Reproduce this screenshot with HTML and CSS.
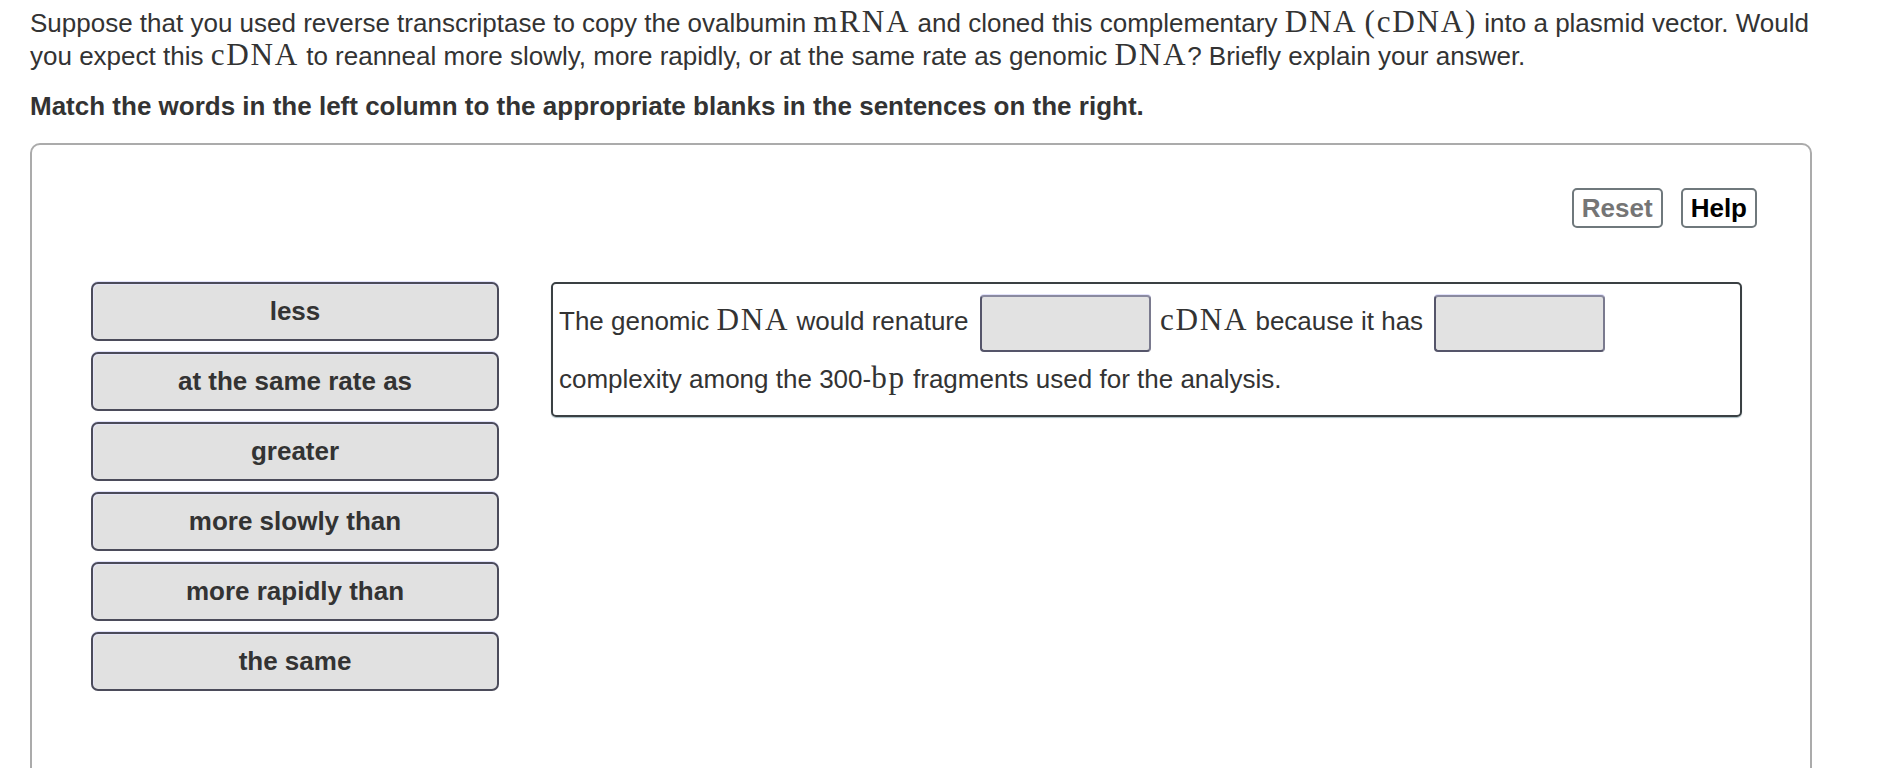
FILE: index.html
```html
<!DOCTYPE html>
<html lang="en">
<head>
<meta charset="utf-8">
<title>Match</title>
<link rel="stylesheet" href="styles.css">
</head>
<body>
<div class="page">
  <p class="question">Suppose that you used reverse transcriptase to copy the ovalbumin <span class="math">mRNA</span> and cloned this complementary <span class="math">DNA</span> <span class="math">(cDNA)</span> into a plasmid vector. Would you expect this <span class="math">cDNA</span> to reanneal more slowly, more rapidly, or at the same rate as genomic <span class="math">DNA</span>? Briefly explain your answer.</p>
  <p class="instruction">Match the words in the left column to the appropriate blanks in the sentences on the right.</p>
  <div class="panel">
    <div class="toolbar">
      <button class="btn btn-reset" type="button">Reset</button>
      <button class="btn btn-help" type="button">Help</button>
    </div>
    <div class="workspace">
      <div class="choices">
        <div class="choice">less</div>
        <div class="choice">at the same rate as</div>
        <div class="choice">greater</div>
        <div class="choice">more slowly than</div>
        <div class="choice">more rapidly than</div>
        <div class="choice">the same</div>
      </div>
      <div class="sentence">The genomic <span class="math">DNA</span> would renature <span class="blank"></span> <span class="math">cDNA</span> because it has <span class="blank"></span><br>complexity among the 300-<span class="math">bp</span> fragments used for the analysis.</div>
    </div>
  </div>
</div>
</body>
</html>
```
FILE: styles.css
```css
html, body {
  margin: 0;
  padding: 0;
  background: #ffffff;
  overflow: hidden;
}

body {
  font-family: "Liberation Sans", Arial, Helvetica, sans-serif;
  color: #333333;
  font-size: 26px;
}

.page {
  padding: 7px 68px 0 30px;
}

.question {
  margin: 0 -40px 0 0;
  line-height: 33px;
}

.math {
  font-family: "Liberation Serif", "Times New Roman", serif;
  font-size: 1.2em;
  letter-spacing: 0.055em;
  line-height: 0;
  color: #333333;
}

.instruction {
  margin: 17px 0 0 0;
  font-weight: bold;
  line-height: 33px;
}

.panel {
  margin-top: 20px;
  border: 2px solid #ababab;
  border-radius: 10px;
  height: 680px;
  box-sizing: border-box;
}

.toolbar {
  display: flex;
  justify-content: flex-end;
  gap: 18px;
  padding: 43px 53px 0 0;
}

.btn {
  font-family: "Liberation Sans", Arial, Helvetica, sans-serif;
  font-size: 26px;
  font-weight: bold;
  height: 40px;
  padding: 0 8px;
  background: #ffffff;
  border: 2px solid #6f787c;
  border-radius: 5px;
  line-height: 36px;
}

.btn-reset {
  color: #757575;
}

.btn-help {
  color: #000000;
}

.workspace {
  display: flex;
  align-items: flex-start;
  gap: 52px;
  padding: 54px 0 0 59px;
}

.choices {
  display: flex;
  flex-direction: column;
  gap: 11px;
  width: 408px;
}

.choice {
  height: 59px;
  box-sizing: border-box;
  background: #e1e1e1;
  border: 2px solid #4b4b5a;
  border-radius: 7px;
  box-shadow: 0 -1px 0 #e2e2fa, inset 1px 1px 0 #e4e4f6;
  display: flex;
  align-items: center;
  justify-content: center;
  font-weight: bold;
  color: #333333;
}

.sentence {
  width: 1191px;
  box-sizing: border-box;
  border: 2px solid #3a4043;
  border-radius: 5px;
  box-shadow: 0 1px 1px #a8bcc2;
  padding: 10px 6px 9px 6px;
  line-height: 54px;
  color: #333333;
}

.blank {
  display: inline-block;
  width: 171px;
  height: 57px;
  margin: 0 2px 0 4px;
  box-sizing: border-box;
  vertical-align: middle;
  background: #e2e2e2;
  border: 2px solid #55556a;
  border-top-color: #8a8aa0;
  border-right-color: #7a7a8e;
  border-radius: 4px;
  box-shadow: 0 -1px 0 #e2e2fa;
}
```
